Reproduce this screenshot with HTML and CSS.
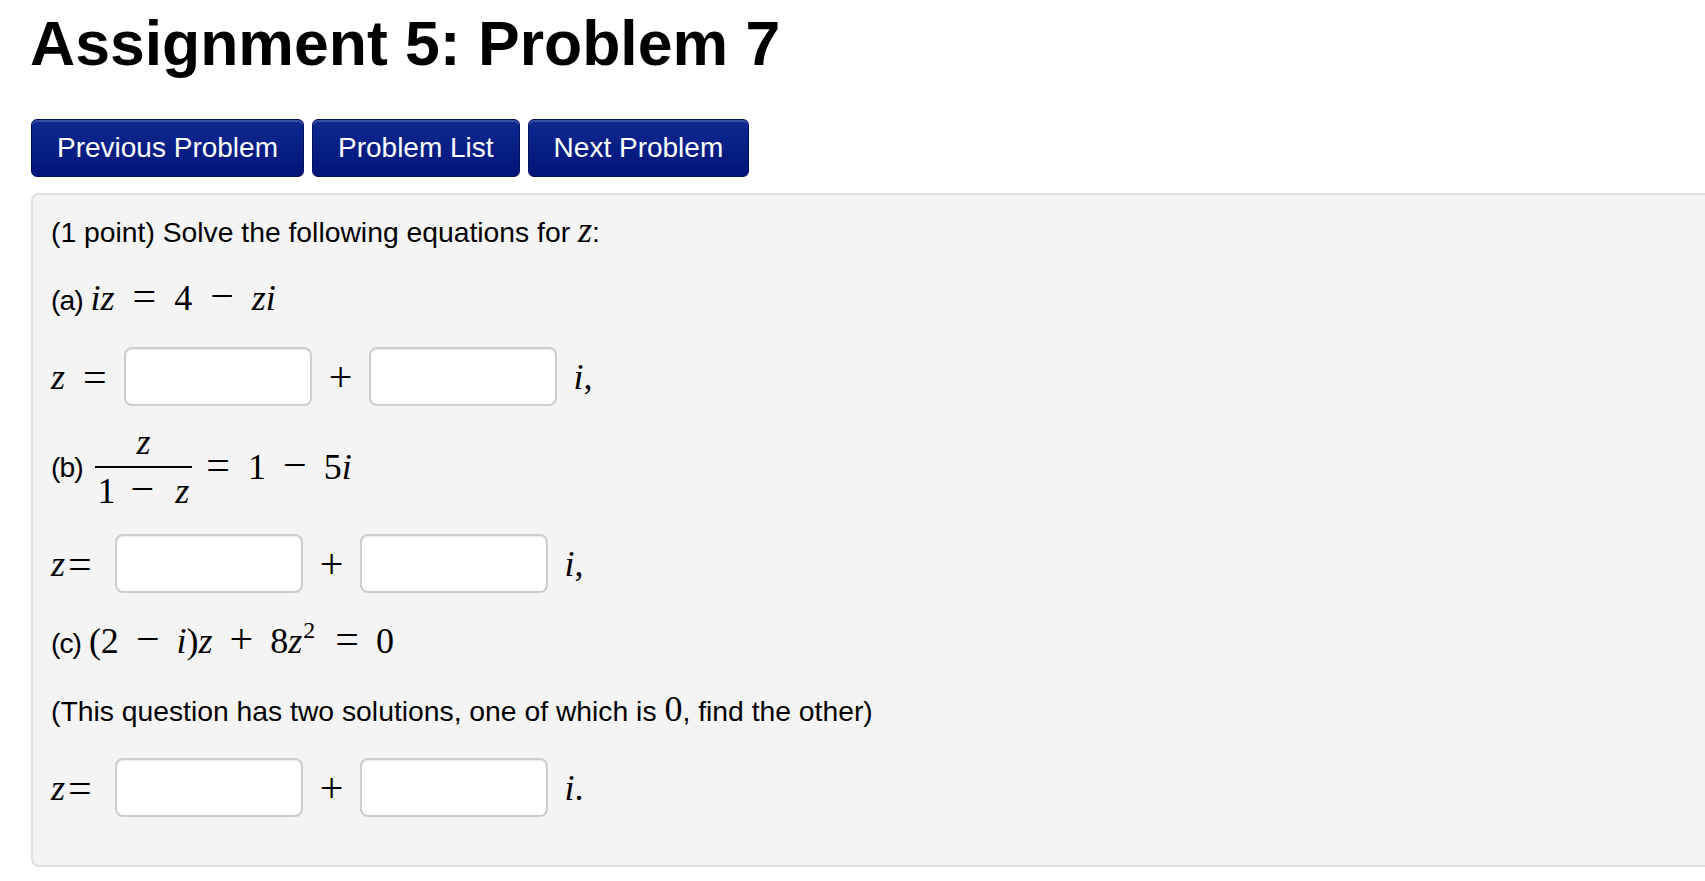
FILE: index.html
```html
<!DOCTYPE html>
<html>
<head>
	<title>Assignment 5: Problem 7</title>
	<link rel="stylesheet" href="styles.css">
</head>
<body>
<div class="page">
	<h1 class="title">Assignment 5: Problem 7</h1>
	<div class="nav">
		<button class="nav_btn">Previous Problem</button>
		<button class="nav_btn">Problem List</button>
		<button class="nav_btn">Next Problem</button>
	</div>
	<div class="problem">
		<p class="line intro">(1 point) Solve the following equations for <span class="m v">z</span>:</p>

		<p class="line line_a"><span class="label">(a)</span> <span class="m v">iz</span><span class="m op">=</span><span class="m">4</span><span class="m op">&minus;</span><span class="m v">zi</span></p>

		<div class="row">
			<span class="m v">z</span><span class="m op eq_wide">=</span>
			<input class="answer" type="text">
			<span class="m op plus">+</span>
			<input class="answer" type="text">
			<span class="m tail"><span class="v">i</span>,</span>
		</div>

		<div class="frac_row">
			<span class="label">(b)</span>
			<span class="frac">
				<span class="num m v">z</span>
				<span class="den m">1<span class="op">&minus;</span><span class="v">z</span></span>
			</span>
			<span class="m rhs"><span class="op">=</span>1<span class="op">&minus;</span>5<span class="v">i</span></span>
		</div>

		<div class="row row_b">
			<span class="m v">z</span><span class="m op eq_tight">=</span>
			<input class="answer" type="text">
			<span class="m op plus">+</span>
			<input class="answer" type="text">
			<span class="m tail"><span class="v">i</span>,</span>
		</div>

		<p class="line line_c"><span class="label">(c)</span> <span class="m">(2<span class="op">&minus;</span><span class="v">i</span>)<span class="v">z</span><span class="op">+</span>8<span class="v">z</span><sup>2</sup><span class="op">=</span>0</span></p>

		<p class="line note">(This question has two solutions, one of which is <span class="m">0</span>, find the other)</p>

		<div class="row last">
			<span class="m v">z</span><span class="m op eq_tight">=</span>
			<input class="answer" type="text">
			<span class="m op plus">+</span>
			<input class="answer" type="text">
			<span class="m tail"><span class="v">i</span>.</span>
		</div>
	</div>
</div>
</body>
</html>
```

FILE: styles.css
```css
body {
	margin: 0;
	background: #fff;
	color: #000;
	font-family: "Liberation Sans", Helvetica, Arial, sans-serif;
	font-size: 28.3px;
	overflow: hidden;
}
.page {
	padding-left: 31px;
}
.title {
	margin: 12px 0 0 -1px;
	font-size: 62.5px;
	line-height: 62px;
	font-weight: bold;
}
.nav {
	display: flex;
	gap: 8px;
	margin-top: 45px;
}
.nav_btn {
	height: 58px;
	padding: 0 25px;
	font-family: "Liberation Sans", Helvetica, Arial, sans-serif;
	font-size: 28px;
	line-height: 40px;
	color: #fff;
	background: linear-gradient(#0d2a91, #001479);
	border: 1px solid #000f5c;
	border-radius: 6px;
	box-shadow: inset 0 2px 0 rgba(255, 255, 255, 0.18);
	cursor: pointer;
}
.problem {
	margin-top: 16px;
	padding: 17px 0 48px 18px;
	background: #f4f4f4;
	border: 2px solid #e0e0e0;
	border-right: 0;
	border-radius: 8px 0 0 8px;
}
.line {
	margin: 0 0 28px;
	line-height: 40px;
}
.label {
	letter-spacing: -1px;
}
.line_a {
	margin-bottom: 27px;
}
.note {
	margin-bottom: 27px;
}

/* math */
.m {
	font-family: "Liberation Serif", "Times New Roman", serif;
	font-size: 36px;
	line-height: 34px;
}
.v {
	font-style: italic;
}
.op {
	font-family: "Liberation Serif", "Times New Roman", serif;
	font-style: normal;
	font-size: 42px;
	line-height: 0;
	margin: 0 16px;
}
.line_a .op {
	margin: 0 18px;
}
.m sup {
	font-size: 24px;
	line-height: 0;
	vertical-align: 15px;
	margin: 0 3px 0 1px;
}
.line_c .op {
	margin: 0 17px;
}

/* answer rows */
.row {
	display: flex;
	align-items: center;
	height: 59px;
	margin-bottom: 28px;
}
.row_b {
	margin-bottom: 30px;
}
.row.last {
	margin-bottom: 0;
}
.row .op {
	line-height: 40px;
}
.eq_wide {
	margin: 0 17px 0 18px;
}
.eq_tight {
	margin: 0 23px 0 3px;
}
.plus {
	margin: 0 17px;
}
.answer {
	width: 188px;
	height: 59px;
	box-sizing: border-box;
	background: #fff;
	border: 2px solid #cdcdcd;
	border-radius: 8px;
	box-shadow: inset 0 1px 1px rgba(0, 0, 0, 0.075);
	font-size: 26px;
	padding: 0 10px;
}
.tail {
	margin-left: 16px;
}

/* fraction row */
.frac_row {
	display: flex;
	align-items: center;
	margin: -7px 0 28px;
	line-height: 40px;
}
.frac {
	display: inline-flex;
	flex-direction: column;
	align-items: center;
	margin-left: 12px;
	padding: 0 2px;
}
.num {
	line-height: 30px;
	padding-bottom: 9px;
}
.den {
	line-height: 30px;
	padding: 6px 3px 0;
	border-top: 2px solid #000;
	margin: 0 -2px;
}
.den .op {
	margin: 0 21px 0 15px;
	line-height: 30px;
}
.rhs .op {
	margin: 0 17px;
}
.rhs .op:first-child {
	margin: 0 18px 0 14px;
}
```
